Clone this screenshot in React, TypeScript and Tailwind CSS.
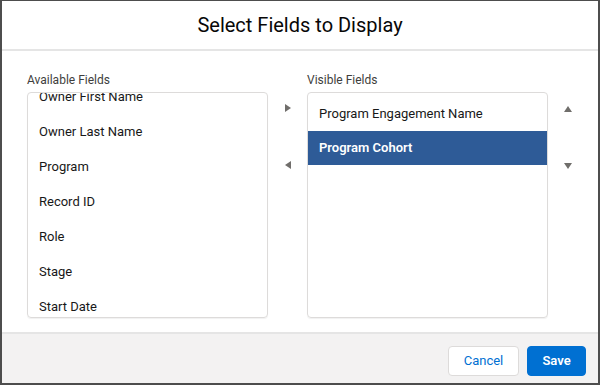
const available = [
  'Owner First Name',
  'Owner Last Name',
  'Program',
  'Record ID',
  'Role',
  'Stage',
  'Start Date',
];

const visible = ['Program Engagement Name', 'Program Cohort'];

const Tri = ({ dir }: { dir: 'up' | 'down' | 'left' | 'right' }) => {
  const points = {
    up: '0,6 4,0 8,6',
    down: '0,0 8,0 4,6',
    left: '6,0 6,8 0,4',
    right: '0,0 6,4 0,8',
  }[dir];
  const vertical = dir === 'up' || dir === 'down';
  return (
    <svg
      width={vertical ? 8 : 6}
      height={vertical ? 6 : 8}
      viewBox={vertical ? '0 0 8 6' : '0 0 6 8'}
    >
      <polygon points={points} fill="#706e6b" />
    </svg>
  );
};

export default function App() {
  return (
    <div
      className="flex h-[385px] w-[600px] flex-col border-x-2 border-t border-b-2 border-[#4d4d4d] bg-white text-[#181818]"
      style={{ fontFamily: 'Roboto, "Noto Sans", Arial, sans-serif' }}
    >
      <div className="flex h-[50px] items-center justify-center border-b-2 border-[#e5e5e5]">
        <h1 className="text-[20px] font-normal text-[#080707]">Select Fields to Display</h1>
      </div>

      <div className="flex flex-1 pl-[25px] pr-[10px] pt-[22px]">
        <div className="flex w-[241px] shrink-0 flex-col">
          <div className="mb-[4px] text-[12px] leading-[15px] text-[#3e3e3c]">Available Fields</div>
          <div className="h-[226px] overflow-hidden rounded-[4px] border border-[#dddbda] shadow-[0_1px_1px_rgba(0,0,0,0.06)]">
            <div className="-mt-[14px]">
              {available.map((f) => (
                <div key={f} className="flex h-[35px] items-center px-[11px] text-[13px]">
                  {f}
                </div>
              ))}
            </div>
          </div>
        </div>

        <div className="flex w-[39px] shrink-0 flex-col items-center pt-[31px]">
          <Tri dir="right" />
          <div className="h-[49px]" />
          <Tri dir="left" />
        </div>

        <div className="flex w-[241px] shrink-0 flex-col">
          <div className="mb-[4px] text-[12px] leading-[15px] text-[#3e3e3c]">Visible Fields</div>
          <div className="h-[226px] overflow-hidden rounded-[4px] border border-[#dddbda] pt-[4px] shadow-[0_1px_1px_rgba(0,0,0,0.06)]">
            {visible.map((f, i) => (
              <div
                key={f}
                className={
                  i === 1
                    ? 'flex h-[34px] items-center bg-[#2e5b97] px-[11px] text-[13px] font-semibold text-white'
                    : 'flex h-[34px] items-center px-[11px] text-[13px]'
                }
              >
                {f}
              </div>
            ))}
          </div>
        </div>

        <div className="flex w-[40px] shrink-0 flex-col items-center pt-[33px]">
          <Tri dir="up" />
          <div className="h-[51px]" />
          <Tri dir="down" />
        </div>
      </div>

      <div className="flex h-[51px] items-center justify-end gap-[8px] border-t-2 border-[#e5e5e5] bg-[#f3f2f2] pr-[12px] pt-[4px]">
        <button className="h-[30px] w-[71px] rounded-[4px] border border-[#dddbda] bg-white text-[13px] text-[#0070d2]">
          Cancel
        </button>
        <button className="h-[30px] w-[59px] rounded-[4px] border border-[#0070d2] bg-[#0070d2] text-[13px] font-semibold text-white">
          Save
        </button>
      </div>
    </div>
  );
}
